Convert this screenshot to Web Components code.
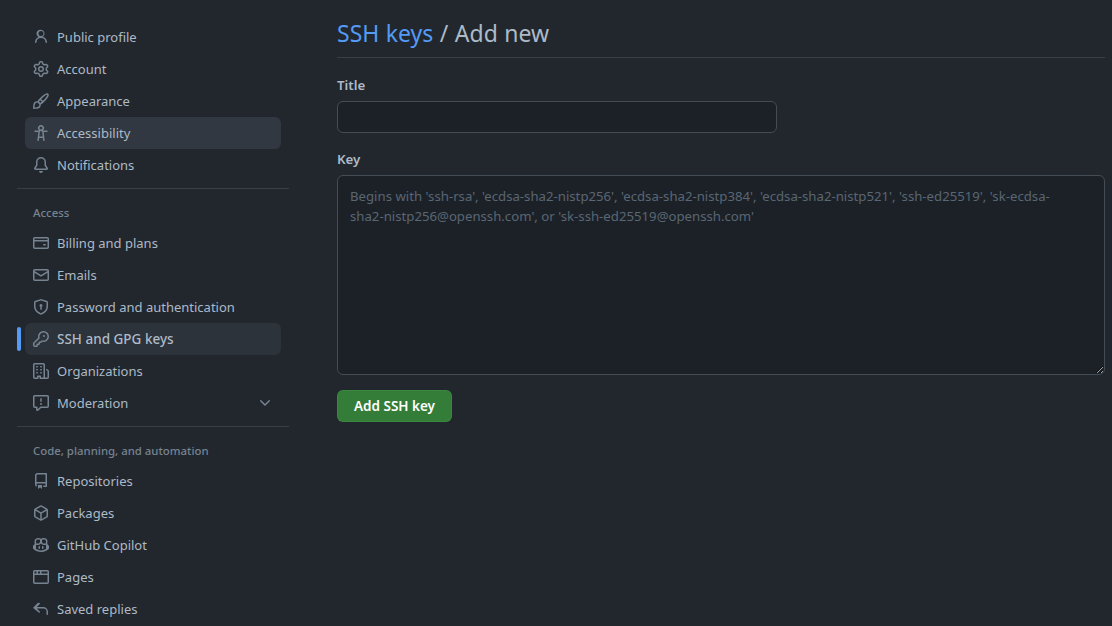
<!DOCTYPE html>
<html lang="en">
<head>
<meta charset="utf-8">
<title>SSH keys / Add new</title>
<style>
  html, body { margin: 0; height: 100%; background: #22272e; overflow: hidden; }
  body { font-family: "Noto Sans", "Liberation Sans", sans-serif; font-size: 13px; color: #adbac7; }
</style>
</head>
<body>
<settings-page>
  <settings-nav slot="nav">
    <nav-item icon="person">Public profile</nav-item>
    <nav-item icon="gear">Account</nav-item>
    <nav-item icon="paintbrush">Appearance</nav-item>
    <nav-item icon="accessibility" hover>Accessibility</nav-item>
    <nav-item icon="bell">Notifications</nav-item>
    <nav-group heading="Access">
      <nav-item icon="card">Billing and plans</nav-item>
      <nav-item icon="mail">Emails</nav-item>
      <nav-item icon="shield">Password and authentication</nav-item>
      <nav-item icon="key" current>SSH and GPG keys</nav-item>
      <nav-item icon="org">Organizations</nav-item>
      <nav-item icon="report" expandable>Moderation</nav-item>
    </nav-group>
    <nav-group heading="Code, planning, and automation">
      <nav-item icon="repo">Repositories</nav-item>
      <nav-item icon="package">Packages</nav-item>
      <nav-item icon="copilot">GitHub Copilot</nav-item>
      <nav-item icon="browser">Pages</nav-item>
      <nav-item icon="reply">Saved replies</nav-item>
    </nav-group>
  </settings-nav>
  <page-heading><a slot="link">SSH keys</a>Add new</page-heading>
  <form-field label="Title"><text-box></text-box></form-field>
  <form-field label="Key">
    <key-area>Begins with 'ssh-rsa', 'ecdsa-sha2-nistp256', 'ecdsa-sha2-nistp384', 'ecdsa-sha2-nistp521', 'ssh-ed25519', 'sk-ecdsa-sha2-nistp256@openssh.com', or 'sk-ssh-ed25519@openssh.com'</key-area>
  </form-field>
  <primary-button>Add SSH key</primary-button>
</settings-page>

<script>
const ICONS = {
  person: "M10.561 8.073a6.005 6.005 0 0 1 3.432 5.142.75.75 0 1 1-1.498.07 4.5 4.5 0 0 0-8.99 0 .75.75 0 0 1-1.498-.07 6.004 6.004 0 0 1 3.431-5.142 3.999 3.999 0 1 1 4.123 0ZM10.5 4.5a2.5 2.5 0 1 0-5 0 2.5 2.5 0 0 0 5 0Z",
  gear: "M8 0a8.2 8.2 0 0 1 .701.031C9.444.095 9.99.645 10.16 1.29l.288 1.107c.018.066.079.158.212.224.231.114.454.243.668.386.123.082.233.09.299.071l1.103-.303c.644-.176 1.392.021 1.82.63.27.385.506.792.704 1.218.315.675.111 1.422-.364 1.891l-.814.806c-.049.048-.098.147-.088.294.016.257.016.515 0 .772-.01.147.038.246.088.294l.814.806c.475.469.679 1.216.364 1.891a7.977 7.977 0 0 1-.704 1.217c-.428.61-1.176.807-1.82.63l-1.102-.302c-.067-.019-.177-.011-.3.071a5.909 5.909 0 0 1-.668.386c-.133.066-.194.158-.211.224l-.29 1.106c-.168.646-.715 1.196-1.458 1.26a8.006 8.006 0 0 1-1.402 0c-.743-.064-1.289-.614-1.458-1.26l-.289-1.106c-.018-.066-.079-.158-.212-.224a5.738 5.738 0 0 1-.668-.386c-.123-.082-.233-.09-.299-.071l-1.103.303c-.644.176-1.392-.021-1.82-.63a8.12 8.12 0 0 1-.704-1.218c-.315-.675-.111-1.422.363-1.891l.815-.806c.05-.048.098-.147.088-.294a6.214 6.214 0 0 1 0-.772c.01-.147-.038-.246-.088-.294l-.815-.806C.635 6.045.431 5.298.746 4.623a7.92 7.92 0 0 1 .704-1.217c.428-.61 1.176-.807 1.82-.63l1.102.302c.067.019.177.011.3-.071.214-.143.437-.272.668-.386.133-.066.194-.158.211-.224l.29-1.106C6.009.645 6.556.095 7.299.03 7.53.01 7.764 0 8 0Zm-.571 1.525c-.036.003-.108.036-.137.146l-.289 1.105c-.147.561-.549.967-.998 1.189-.173.086-.34.183-.5.29-.417.278-.97.423-1.529.27l-1.103-.303c-.109-.03-.175.016-.195.045-.22.312-.412.644-.573.99-.014.031-.021.11.059.19l.815.806c.411.406.562.957.53 1.456a4.709 4.709 0 0 0 0 .582c.032.499-.119 1.05-.53 1.456l-.815.806c-.081.08-.073.159-.059.19.162.346.353.677.573.989.02.03.085.076.195.046l1.102-.303c.56-.153 1.113-.008 1.53.27.161.107.328.204.501.29.447.222.85.629.997 1.189l.289 1.105c.029.109.101.143.137.146a6.6 6.6 0 0 0 1.142 0c.036-.003.108-.036.137-.146l.289-1.105c.147-.561.549-.967.998-1.189.173-.086.34-.183.5-.29.417-.278.97-.423 1.529-.27l1.103.303c.109.029.175-.016.195-.045.22-.313.411-.644.573-.99.014-.031.021-.11-.059-.19l-.815-.806c-.411-.406-.562-.957-.53-1.456a4.709 4.709 0 0 0 0-.582c-.032-.499.119-1.05.53-1.456l.815-.806c.081-.08.073-.159.059-.19a6.464 6.464 0 0 0-.573-.989c-.02-.03-.085-.076-.195-.046l-1.102.303c-.56.153-1.113.008-1.53-.27a4.44 4.44 0 0 0-.501-.29c-.447-.222-.85-.629-.997-1.189l-.289-1.105c-.029-.11-.101-.143-.137-.146a6.6 6.6 0 0 0-1.142 0ZM11 8a3 3 0 1 1-6 0 3 3 0 0 1 6 0ZM9.5 8a1.5 1.5 0 1 0-3.001.001A1.5 1.5 0 0 0 9.5 8Z",
  paintbrush: "M11.134 1.535c.7-.509 1.416-.942 2.076-1.155.649-.21 1.463-.267 2.069.34.603.601.568 1.411.368 2.07-.202.668-.624 1.39-1.125 2.096-1.011 1.424-2.496 2.987-3.775 4.249-1.098 1.084-2.132 1.839-3.04 2.3a3.744 3.744 0 0 1-1.055 3.217c-.431.431-1.065.691-1.657.861-.614.177-1.294.287-1.914.357A21.151 21.151 0 0 1 .797 16H.743l.007-.75H.749L.742 16a.75.75 0 0 1-.743-.742l.743-.008-.742.007v-.054a21.25 21.25 0 0 1 .13-2.284c.067-.647.187-1.287.358-1.914.17-.591.43-1.226.86-1.657a3.746 3.746 0 0 1 3.227-1.054c.466-.893 1.225-1.907 2.314-2.982 1.271-1.255 2.833-2.75 4.245-3.777ZM1.62 13.089c-.051.464-.086.929-.104 1.395.466-.018.932-.053 1.396-.104a10.511 10.511 0 0 0 1.668-.309c.526-.151.856-.325 1.011-.48a2.25 2.25 0 1 0-3.182-3.182c-.155.155-.329.485-.48 1.01a10.515 10.515 0 0 0-.309 1.67Zm10.396-10.34c-1.224.89-2.605 2.189-3.822 3.384l1.718 1.718c1.21-1.205 2.51-2.597 3.387-3.833.47-.662.78-1.227.912-1.662.134-.444.032-.551.009-.575h-.001V1.78c-.014-.014-.113-.113-.548.027-.432.14-.995.462-1.655.942Zm-4.832 7.266-.001.001a9.859 9.859 0 0 0 1.63-1.142L7.155 7.216a9.7 9.7 0 0 0-1.161 1.607c.482.302.889.71 1.19 1.192Z",
  accessibility: "M9.923 5.302c.063.063.122.129.178.198H14A.75.75 0 0 1 14 7h-3.3l.578 5.163.362 2.997a.75.75 0 0 1-1.49.18L9.868 13H6.132l-.282 2.34a.75.75 0 0 1-1.49-.18l.362-2.997L5.3 7H2a.75.75 0 0 1 0-1.5h3.9a2.54 2.54 0 0 1 .176-.198 3 3 0 1 1 3.847 0ZM9.2 7.073h-.001a1.206 1.206 0 0 0-2.398 0L6.305 11.5h3.39ZM9.5 3a1.5 1.5 0 1 0-3.001.001A1.5 1.5 0 0 0 9.5 3Z",
  bell: "M8 16a2 2 0 0 0 1.985-1.75c.017-.137-.097-.25-.235-.25h-3.5c-.138 0-.252.113-.235.25A2 2 0 0 0 8 16ZM3 5a5 5 0 0 1 10 0v2.947c0 .05.015.098.042.139l1.703 2.555A1.519 1.519 0 0 1 13.482 13H2.518a1.516 1.516 0 0 1-1.263-2.36l1.703-2.554A.255.255 0 0 0 3 7.947Zm5-3.5A3.5 3.5 0 0 0 4.5 5v2.947c0 .346-.102.683-.294.97l-1.703 2.556a.017.017 0 0 0-.003.01l.001.006c0 .002.002.004.004.006l.006.004.007.001h10.964l.007-.001.006-.004.004-.006.001-.007a.017.017 0 0 0-.003-.01l-1.703-2.554a1.745 1.745 0 0 1-.294-.97V5A3.5 3.5 0 0 0 8 1.5Z",
  card: "M10.75 9a.75.75 0 0 0 0 1.5h1.5a.75.75 0 0 0 0-1.5h-1.5ZM0 3.75C0 2.784.784 2 1.75 2h12.5c.966 0 1.75.784 1.75 1.75v8.5A1.75 1.75 0 0 1 14.25 14H1.75A1.75 1.75 0 0 1 0 12.25ZM14.5 6.5h-13v5.75c0 .138.112.25.25.25h12.5a.25.25 0 0 0 .25-.25Zm0-2.75a.25.25 0 0 0-.25-.25H1.75a.25.25 0 0 0-.25.25V5h13Z",
  mail: "M1.75 2h12.5c.966 0 1.75.784 1.75 1.75v8.5A1.75 1.75 0 0 1 14.25 14H1.75A1.75 1.75 0 0 1 0 12.25v-8.5C0 2.784.784 2 1.75 2ZM1.5 12.251c0 .138.112.25.25.25h12.5a.25.25 0 0 0 .25-.25V5.809L8.38 9.397a.75.75 0 0 1-.76 0L1.5 5.809v6.442Zm13-8.181v-.32a.25.25 0 0 0-.25-.25H1.75a.25.25 0 0 0-.25.25v.32L8 7.88Z",
  shield: "M7.467.133a1.748 1.748 0 0 1 1.066 0l5.25 1.68A1.75 1.75 0 0 1 15 3.48V7c0 1.566-.32 3.182-1.303 4.682-.983 1.498-2.585 2.813-5.032 3.855a1.697 1.697 0 0 1-1.33 0c-2.447-1.042-4.049-2.357-5.032-3.855C1.32 10.182 1 8.566 1 7V3.48a1.75 1.75 0 0 1 1.217-1.667Zm.61 1.429a.25.25 0 0 0-.153 0l-5.25 1.68a.25.25 0 0 0-.174.238V7c0 1.358.275 2.666 1.057 3.86.784 1.194 2.121 2.34 4.366 3.297a.196.196 0 0 0 .154 0c2.245-.956 3.582-2.104 4.366-3.298C13.225 9.666 13.5 8.36 13.5 7V3.48a.251.251 0 0 0-.174-.237l-5.25-1.68ZM9.5 6.5c0 .536-.286 1.032-.75 1.3v2.45a.75.75 0 0 1-1.5 0V7.8A1.5 1.5 0 1 1 9.5 6.5Z",
  key: "M10.5 0a5.499 5.499 0 1 1-1.288 10.848l-.932.932a.749.749 0 0 1-.53.22H7v.75a.749.749 0 0 1-.22.53l-.5.5a.749.749 0 0 1-.53.22H5v.75a.749.749 0 0 1-.22.53l-.5.5a.749.749 0 0 1-.53.22h-2A1.75 1.75 0 0 1 0 14.25v-2c0-.199.079-.389.22-.53l4.932-4.932A5.5 5.5 0 0 1 10.5 0Zm-4 5.5c-.001.431.069.86.205 1.269a.75.75 0 0 1-.181.768L1.5 12.56v1.69c0 .138.112.25.25.25h1.69l.06-.06v-1.19a.75.75 0 0 1 .75-.75h1.19l.06-.06v-1.19a.75.75 0 0 1 .75-.75h1.19l1.023-1.025a.75.75 0 0 1 .768-.18A4 4 0 1 0 6.5 5.5ZM11 6a1 1 0 1 1 0-2 1 1 0 0 1 0 2Z",
  org: "M1.75 16A1.75 1.75 0 0 1 0 14.25V1.75C0 .784.784 0 1.75 0h8.5C11.216 0 12 .784 12 1.75v12.5c0 .085-.006.168-.018.25h2.268a.25.25 0 0 0 .25-.25V8.285a.25.25 0 0 0-.111-.208l-1.055-.703a.749.749 0 1 1 .832-1.248l1.055.703c.487.325.779.871.779 1.456v5.965A1.75 1.75 0 0 1 14.25 16h-3.5a.766.766 0 0 1-.197-.026c-.099.017-.2.026-.303.026h-3a.75.75 0 0 1-.75-.75V14h-1v1.25a.75.75 0 0 1-.75.75Zm-.25-1.75c0 .138.112.25.25.25H4v-1.25a.75.75 0 0 1 .75-.75h2.5a.75.75 0 0 1 .75.75v1.25h2.25a.25.25 0 0 0 .25-.25V1.75a.25.25 0 0 0-.25-.25h-8.5a.25.25 0 0 0-.25.25ZM3.75 6h.5a.75.75 0 0 1 0 1.5h-.5a.75.75 0 0 1 0-1.5ZM3 3.75A.75.75 0 0 1 3.75 3h.5a.75.75 0 0 1 0 1.5h-.5A.75.75 0 0 1 3 3.75Zm4 3A.75.75 0 0 1 7.75 6h.5a.75.75 0 0 1 0 1.5h-.5A.75.75 0 0 1 7 6.75ZM7.75 3h.5a.75.75 0 0 1 0 1.5h-.5a.75.75 0 0 1 0-1.5ZM3 9.75A.75.75 0 0 1 3.75 9h.5a.75.75 0 0 1 0 1.5h-.5A.75.75 0 0 1 3 9.75ZM7.75 9h.5a.75.75 0 0 1 0 1.5h-.5a.75.75 0 0 1 0-1.5Z",
  report: "M0 1.75C0 .784.784 0 1.75 0h12.5C15.216 0 16 .784 16 1.75v9.5A1.75 1.75 0 0 1 14.25 13H8.06l-2.573 2.573A1.458 1.458 0 0 1 3 14.543V13H1.75A1.75 1.75 0 0 1 0 11.25Zm1.75-.25a.25.25 0 0 0-.25.25v9.5c0 .138.112.25.25.25h2a.75.75 0 0 1 .75.75v2.19l2.72-2.72a.749.749 0 0 1 .53-.22h6.5a.25.25 0 0 0 .25-.25v-9.5a.25.25 0 0 0-.25-.25Zm7 2.25v2.5a.75.75 0 0 1-1.5 0v-2.5a.75.75 0 0 1 1.5 0ZM9 9a1 1 0 1 1-2 0 1 1 0 0 1 2 0Z",
  chevron: "M12.78 5.22a.749.749 0 0 1 0 1.06l-4.25 4.25a.749.749 0 0 1-1.06 0L3.22 6.28a.749.749 0 1 1 1.06-1.06L8 8.939l3.72-3.719a.749.749 0 0 1 1.06 0Z",
  repo: "M2 2.5A2.5 2.5 0 0 1 4.5 0h8.75a.75.75 0 0 1 .75.75v12.5a.75.75 0 0 1-.75.75h-2.5a.75.75 0 0 1 0-1.5h1.75v-2h-8a1 1 0 0 0-.714 1.7.75.75 0 1 1-1.072 1.05A2.495 2.495 0 0 1 2 11.5Zm10.5-1h-8a1 1 0 0 0-1 1v6.708A2.486 2.486 0 0 1 4.5 9h8ZM5 12.25a.25.25 0 0 1 .25-.25h3.5a.25.25 0 0 1 .25.25v3.25a.25.25 0 0 1-.4.2l-1.45-1.087a.249.249 0 0 0-.3 0L5.4 15.7a.25.25 0 0 1-.4-.2Z",
  package: "m8.878.392 5.25 3.045c.54.314.872.89.872 1.514v6.098a1.75 1.75 0 0 1-.872 1.514l-5.25 3.045a1.75 1.75 0 0 1-1.756 0l-5.25-3.045A1.75 1.75 0 0 1 1 11.049V4.951c0-.624.332-1.201.872-1.514L7.122.392a1.75 1.75 0 0 1 1.756 0ZM7.875 1.69l-4.63 2.685L8 7.133l4.755-2.758-4.63-2.685a.248.248 0 0 0-.25 0ZM2.5 5.677v5.372c0 .09.047.171.125.216l4.625 2.683V8.432Zm6.25 8.271 4.625-2.683a.25.25 0 0 0 .125-.216V5.677L8.75 8.432Z",
  copilot: "M7.998 15.035c-4.562 0-7.873-2.914-7.998-3.749V9.338c.085-.628.677-1.686 1.588-2.065.013-.07.024-.143.036-.218.029-.183.06-.384.126-.612-.201-.508-.254-1.084-.254-1.656 0-.87.128-1.769.693-2.484.579-.733 1.494-1.124 2.724-1.261 1.206-.134 2.262.034 2.944.765.05.053.096.108.139.165.044-.057.094-.112.143-.165.682-.731 1.738-.899 2.944-.765 1.23.137 2.145.528 2.724 1.261.566.715.693 1.614.693 2.484 0 .572-.053 1.148-.254 1.656.066.228.098.429.126.612.012.076.024.148.037.218.924.385 1.522 1.471 1.591 2.095v1.872c0 .766-3.351 3.795-8.002 3.795Zm0-1.485c2.28 0 4.584-1.11 5.002-1.433V7.862l-.023-.116c-.49.21-1.075.291-1.727.291-1.146 0-2.059-.327-2.71-.991A3.222 3.222 0 0 1 8 6.303a3.24 3.24 0 0 1-.544.743c-.65.664-1.563.991-2.71.991-.652 0-1.236-.081-1.727-.291l-.023.116v4.255c.419.323 2.722 1.433 5.002 1.433ZM6.762 2.83c-.193-.206-.637-.413-1.682-.297-1.019.113-1.479.404-1.713.7-.247.312-.369.789-.369 1.554 0 .793.129 1.171.308 1.371.162.181.519.379 1.442.379.853 0 1.339-.235 1.638-.54.315-.322.527-.827.617-1.553.117-.935-.037-1.395-.241-1.614Zm4.155-.297c-1.044-.116-1.488.091-1.681.297-.204.219-.359.679-.242 1.614.091.726.303 1.231.618 1.553.299.305.784.54 1.638.54.922 0 1.28-.198 1.442-.379.179-.2.308-.578.308-1.371 0-.765-.123-1.242-.37-1.554-.233-.296-.693-.587-1.713-.7ZM6.25 9.037a.75.75 0 0 1 .75.75v1.501a.75.75 0 0 1-1.5 0V9.787a.75.75 0 0 1 .75-.75Zm4.25.75v1.501a.75.75 0 0 1-1.5 0V9.787a.75.75 0 0 1 1.5 0Z",
  browser: "M0 2.75C0 1.784.784 1 1.75 1h12.5c.966 0 1.75.784 1.75 1.75v10.5A1.75 1.75 0 0 1 14.25 15H1.75A1.75 1.75 0 0 1 0 13.25ZM14.5 6h-13v7.25c0 .138.112.25.25.25h12.5a.25.25 0 0 0 .25-.25Zm-6-3.5v2h6V2.75a.25.25 0 0 0-.25-.25ZM5 2.5v2h2v-2Zm-3.25 0a.25.25 0 0 0-.25.25V4.5h2v-2Z",
  reply: "M6.78 1.97a.75.75 0 0 1 0 1.06L3.81 6h6.44A4.75 4.75 0 0 1 15 10.75v2.5a.75.75 0 0 1-1.5 0v-2.5a3.25 3.25 0 0 0-3.25-3.25H3.81l2.97 2.97a.749.749 0 1 1-1.06 1.06L.47 7.28a.749.749 0 0 1 0-1.06l4.25-4.25a.749.749 0 0 1 1.06 0Z",
};

function svgIcon(name) {
  return `<svg viewBox="0 0 16 16" width="16" height="16" fill="currentColor" aria-hidden="true"><path d="${ICONS[name]}"></path></svg>`;
}

class SettingsPage extends HTMLElement {
  constructor() {
    super();
    this.attachShadow({ mode: "open" });
    this.shadowRoot.innerHTML = `
      <style>
        :host { display: flex; height: 626px; overflow: hidden; padding-left: 17px; box-sizing: border-box; }
        .side { flex: 0 0 272px; padding-top: 21px; }
        main { flex: 1; min-width: 0; margin-left: 48px; margin-right: 7px; }
      </style>
      <div class="side"><slot name="nav"></slot></div>
      <main><slot></slot></main>
    `;
  }
}

class SettingsNav extends HTMLElement {
  constructor() {
    super();
    this.attachShadow({ mode: "open" });
    this.shadowRoot.innerHTML = `
      <style>
        :host { display: block; }
      </style>
      <slot></slot>
    `;
  }
}

class NavGroup extends HTMLElement {
  constructor() {
    super();
    this.attachShadow({ mode: "open" });
    this.shadowRoot.innerHTML = `
      <style>
        :host { display: block; }
        .rule { height: 1px; background: #373e47; margin-top: 7px; }
        h3 { margin: 0; padding: 16px 16px 6px; font-size: 11.4px; line-height: 16px; font-weight: 500; color: #768390; height: 16px; }
      </style>
      <div class="rule"></div>
      <h3>${this.getAttribute("heading")}</h3>
      <slot></slot>
    `;
  }
}

class NavItem extends HTMLElement {
  constructor() {
    super();
    const current = this.hasAttribute("current");
    const expandable = this.hasAttribute("expandable");
    this.attachShadow({ mode: "open" });
    this.shadowRoot.innerHTML = `
      <style>
        :host { display: block; position: relative; margin: 0 8px; height: 32px; }
        .row { display: flex; align-items: center; gap: 8px; height: 32px; padding: 0 8px; border-radius: 6px; color: #adbac7; line-height: 20px; }
        :host([hover]) .row { background: #323841; }
        :host([current]) .row { background: #2d333b; font-weight: 500; font-size: 13.5px; }
        svg { flex: none; color: #768390; }
        .label { flex: 1; white-space: nowrap; }
        .bar { position: absolute; left: -8px; top: 4px; width: 4px; height: 24px; border-radius: 6px; background: #539bf5; }
      </style>
      ${current ? `<span class="bar"></span>` : ""}
      <div class="row">
        ${svgIcon(this.getAttribute("icon"))}
        <span class="label"><slot></slot></span>
        ${expandable ? svgIcon("chevron") : ""}
      </div>
    `;
  }
}

class PageHeading extends HTMLElement {
  constructor() {
    super();
    this.attachShadow({ mode: "open" });
    this.shadowRoot.innerHTML = `
      <style>
        :host { display: block; border-bottom: 1px solid #373e47; height: 57px; box-sizing: content-box; margin-bottom: 17px; }
        h2 { margin: 0; padding-top: 15px; font-size: 23px; word-spacing: .5px; line-height: 36px; font-weight: 400; color: #adbac7; }
        ::slotted(a) { color: #539bf5; }
      </style>
      <h2><slot name="link"></slot> / <slot></slot></h2>
    `;
  }
}

class FormField extends HTMLElement {
  constructor() {
    super();
    this.attachShadow({ mode: "open" });
    this.shadowRoot.innerHTML = `
      <style>
        :host { display: block; margin-bottom: 16px; }
        label { display: block; font-weight: 600; font-size: 13.3px; line-height: 20px; margin-bottom: 6px; color: #adbac7; }
      </style>
      <label>${this.getAttribute("label")}</label>
      <slot></slot>
    `;
  }
}

class TextBox extends HTMLElement {
  constructor() {
    super();
    this.attachShadow({ mode: "open" });
    this.shadowRoot.innerHTML = `
      <style>
        :host { display: block; width: 440px; height: 32px; box-sizing: border-box; background: #1c2128; border: 1px solid #444c56; border-radius: 6px; }
      </style>
    `;
  }
}

class KeyArea extends HTMLElement {
  constructor() {
    super();
    this.attachShadow({ mode: "open" });
    this.shadowRoot.innerHTML = `
      <style>
        :host { display: block; }
        .box { box-sizing: border-box; height: 200px; padding: 10px 24px 10px 12px; background: #1c2128; border: 1px solid #444c56; border-radius: 6px; color: #5a6672; font-size: 13.2px; line-height: 20px; resize: vertical; overflow: auto; color-scheme: dark; }
      </style>
      <div class="box"><slot></slot></div>
    `;
  }
}

class PrimaryButton extends HTMLElement {
  constructor() {
    super();
    this.attachShadow({ mode: "open" });
    this.shadowRoot.innerHTML = `
      <style>
        :host { display: inline-block; margin-top: -1px; }
        button { display: block; height: 32px; padding: 0 16px; background: #347d39; border: 1px solid #46954a66; border-radius: 6px; color: #fff; font: 600 13.5px/20px "Noto Sans", "Liberation Sans", sans-serif; }
      </style>
      <button type="button"><slot></slot></button>
    `;
  }
}

customElements.define("settings-page", SettingsPage);
customElements.define("settings-nav", SettingsNav);
customElements.define("nav-group", NavGroup);
customElements.define("nav-item", NavItem);
customElements.define("page-heading", PageHeading);
customElements.define("form-field", FormField);
customElements.define("text-box", TextBox);
customElements.define("key-area", KeyArea);
customElements.define("primary-button", PrimaryButton);
</script>
</body>
</html>
